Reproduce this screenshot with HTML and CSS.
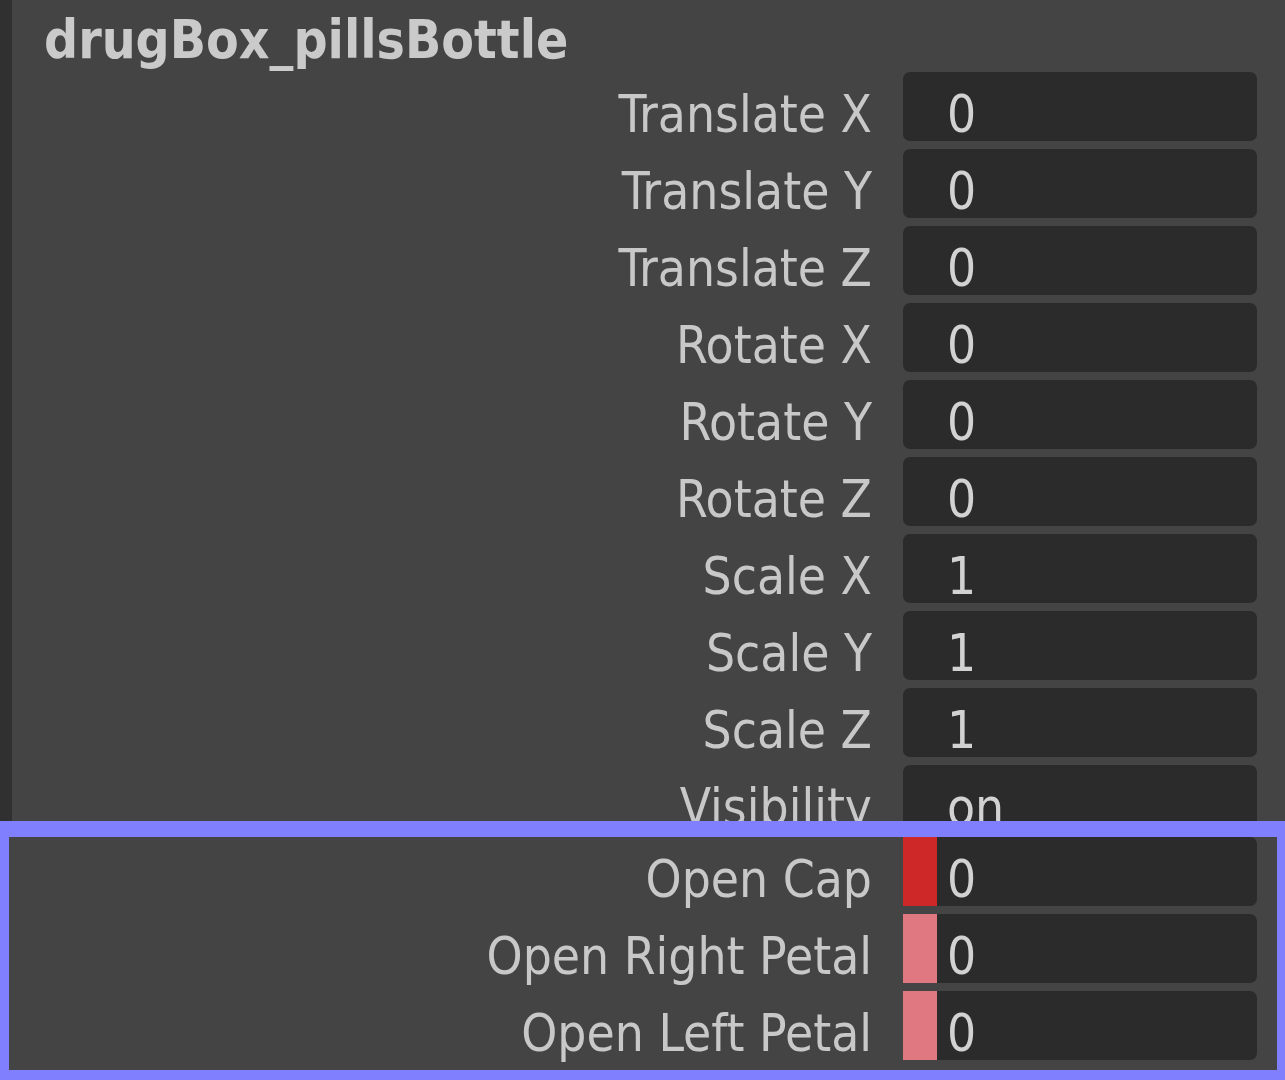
FILE: index.html
```html
<!DOCTYPE html>
<html lang="en">
<head>
<meta charset="utf-8">
<title>Channel Box</title>
<link rel="stylesheet" href="styles.css">
</head>
<body>
<div class="panel">
  <div class="upper">
    <div class="strip"></div>
    <div class="upper-content">
      <div class="title">drugBox_pillsBottle</div>
      <div class="rows">
        <div class="row"><div class="label">Translate X</div><div class="field"><span class="swatch"></span><span class="value">0</span></div></div>
        <div class="row"><div class="label">Translate Y</div><div class="field"><span class="swatch"></span><span class="value">0</span></div></div>
        <div class="row"><div class="label">Translate Z</div><div class="field"><span class="swatch"></span><span class="value">0</span></div></div>
        <div class="row"><div class="label">Rotate X</div><div class="field"><span class="swatch"></span><span class="value">0</span></div></div>
        <div class="row"><div class="label">Rotate Y</div><div class="field"><span class="swatch"></span><span class="value">0</span></div></div>
        <div class="row"><div class="label">Rotate Z</div><div class="field"><span class="swatch"></span><span class="value">0</span></div></div>
        <div class="row"><div class="label">Scale X</div><div class="field"><span class="swatch"></span><span class="value">1</span></div></div>
        <div class="row"><div class="label">Scale Y</div><div class="field"><span class="swatch"></span><span class="value">1</span></div></div>
        <div class="row"><div class="label">Scale Z</div><div class="field"><span class="swatch"></span><span class="value">1</span></div></div>
        <div class="row"><div class="label">Visibility</div><div class="field"><span class="swatch"></span><span class="value">on</span></div></div>
      </div>
    </div>
  </div>
  <div class="shape-box">
    <div class="rows">
      <div class="row"><div class="label">Open Cap</div><div class="field"><span class="swatch swatch-red"></span><span class="value">0</span></div></div>
      <div class="row"><div class="label">Open Right Petal</div><div class="field"><span class="swatch swatch-pink"></span><span class="value">0</span></div></div>
      <div class="row"><div class="label">Open Left Petal</div><div class="field"><span class="swatch swatch-pink"></span><span class="value">0</span></div></div>
    </div>
  </div>
</div>
</body>
</html>
```

FILE: styles.css
```css
html, body {
  margin: 0;
  padding: 0;
  background: #444444;
}

body {
  width: 1285px;
  height: 1080px;
  overflow: hidden;
  font-family: "DejaVu Sans Condensed", "DejaVu Sans", sans-serif;
  font-stretch: condensed;
  color: #c8c8c8;
}

.panel {
  display: flex;
  flex-direction: column;
  height: 1080px;
}

.upper {
  display: flex;
  height: 821px;
  overflow: hidden;
  flex: none;
}

.strip {
  width: 12px;
  flex: none;
  background: #303030;
}

.upper-content {
  flex: 1;
  padding-right: 28px;
}

.title {
  padding: 11px 0 0 32px;
  margin-bottom: 3px;
  line-height: 58px;
  font-size: 53px;
  font-weight: bold;
  white-space: nowrap;
  color: #cacaca;
}

.rows {
  display: flex;
  flex-direction: column;
  gap: 8px;
}

.row {
  display: grid;
  grid-template-columns: 1fr 354px;
  column-gap: 31px;
  height: 69px;
  flex: none;
}

.label,
.value {
  font-size: 51px;
  line-height: 50px;
  padding-top: 18px;
  white-space: nowrap;
}

.label {
  text-align: right;
}

.field {
  display: flex;
  background: #2b2b2b;
  border-radius: 7px;
}

.swatch {
  width: 34px;
  flex: none;
}

.swatch-red {
  background: #cf2828;
}

.swatch-pink {
  background: #e07881;
}

.value {
  padding-left: 10px;
  color: #d2d2d2;
}

.shape-box {
  flex: none;
  height: 259px;
  box-sizing: border-box;
  border-style: solid;
  border-color: #8080ff;
  border-width: 16px 8px 10px 9px;
  padding: 0 20px 10px 0;
}
```
